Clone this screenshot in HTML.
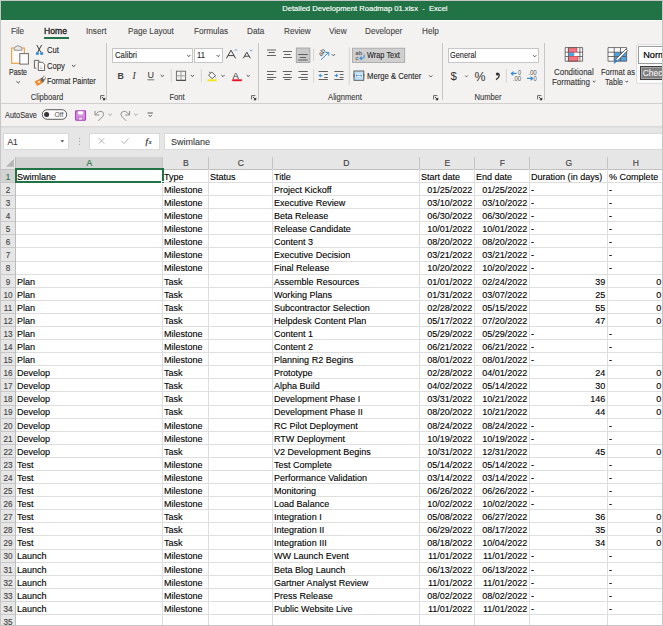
<!DOCTYPE html><html><head><meta charset="utf-8"><style>
*{margin:0;padding:0;box-sizing:border-box}
html,body{width:663px;height:626px;overflow:hidden;background:#fff}
body{position:relative;font-family:"Liberation Sans",sans-serif;color:#262626}
.a{position:absolute}
.t{position:absolute;white-space:nowrap;line-height:1;-webkit-text-stroke-width:0.1px}
.rb{font-size:7.7px;color:#262626}
.tab{font-size:8.3px;color:#3b3b3b}
.cell{font-size:9.5px;color:#000;-webkit-text-stroke:0.12px #000;transform:scaleX(0.95);transform-origin:0 0}
.cr{transform-origin:100% 0}
.hd{font-size:8.6px;color:#333;-webkit-text-stroke-width:0.15px}
svg{position:absolute;overflow:visible}
</style></head><body>
<div class="a" style="left:0;top:0;width:663px;height:103px;background:#f3f2f1"></div>
<div class="a" style="left:0;top:103px;width:663px;height:23.5px;background:#f3f2f1"></div>
<div class="a" style="left:0;top:126.5px;width:663px;height:30px;background:#e6e6e6"></div>
<div class="a" style="left:0;top:0;width:663px;height:20px;background:#217346;border-top:1px solid #1a5c38"></div>
<div class="t" style="left:282.2px;top:5.2px;font-size:7.62px;color:#fff;-webkit-text-stroke:0.15px #fff">Detailed Development Roadmap 01.xlsx&nbsp; -&nbsp; Excel</div>
<div class="a" style="left:0;top:20px;width:663px;height:1px;background:#fbfbfb"></div>
<div class="t" style="left:10.6px;top:27.00px;font-size:8.9px;color:#444;transform-origin:0 0;transform:scaleX(0.92);">File</div>
<div class="t" style="left:43.7px;top:27.00px;font-size:8.9px;color:#262626;transform-origin:0 0;transform:scaleX(0.97);-webkit-text-stroke:0.35px #262626">Home</div>
<div class="t" style="left:86.3px;top:27.00px;font-size:8.9px;color:#444;transform-origin:0 0;transform:scaleX(0.92);">Insert</div>
<div class="t" style="left:127.8px;top:27.00px;font-size:8.9px;color:#444;transform-origin:0 0;transform:scaleX(0.92);">Page Layout</div>
<div class="t" style="left:193.5px;top:27.00px;font-size:8.9px;color:#444;transform-origin:0 0;transform:scaleX(0.92);">Formulas</div>
<div class="t" style="left:247px;top:27.00px;font-size:8.9px;color:#444;transform-origin:0 0;transform:scaleX(0.92);">Data</div>
<div class="t" style="left:284px;top:27.00px;font-size:8.9px;color:#444;transform-origin:0 0;transform:scaleX(0.92);">Review</div>
<div class="t" style="left:328.5px;top:27.00px;font-size:8.9px;color:#444;transform-origin:0 0;transform:scaleX(0.92);">View</div>
<div class="t" style="left:364.7px;top:27.00px;font-size:8.9px;color:#444;transform-origin:0 0;transform:scaleX(0.92);">Developer</div>
<div class="t" style="left:421.5px;top:27.00px;font-size:8.9px;color:#444;transform-origin:0 0;transform:scaleX(0.92);">Help</div>
<div class="a" style="left:44px;top:37px;width:25px;height:2px;background:#217346"></div>
<div class="a" style="left:0;top:102.8px;width:663px;height:1px;background:#d2d0ce"></div>
<div class="a" style="left:0;top:126px;width:663px;height:2.4px;background:linear-gradient(#d6d6d6,#e2e2e2)"></div>
<div class="a" style="left:105.6px;top:43px;width:1px;height:57px;background:#c8c6c4"></div>
<div class="a" style="left:258.4px;top:43px;width:1px;height:57px;background:#c8c6c4"></div>
<div class="a" style="left:442px;top:43px;width:1px;height:57px;background:#c8c6c4"></div>
<div class="a" style="left:543.8px;top:43px;width:1px;height:57px;background:#c8c6c4"></div>
<div class="t" style="left:47.3px;top:94.00px;font-size:8.2px;color:#3a3a3a;transform-origin:0 0;transform:scaleX(0.93) translateX(-50%);">Clipboard</div>
<div class="t" style="left:177px;top:94.00px;font-size:8.2px;color:#3a3a3a;transform-origin:0 0;transform:scaleX(0.93) translateX(-50%);">Font</div>
<div class="t" style="left:345px;top:94.00px;font-size:8.2px;color:#3a3a3a;transform-origin:0 0;transform:scaleX(0.93) translateX(-50%);">Alignment</div>
<div class="t" style="left:488px;top:94.00px;font-size:8.2px;color:#3a3a3a;transform-origin:0 0;transform:scaleX(0.93) translateX(-50%);">Number</div>
<svg style="left:99.6px;top:95px" width="6" height="6" viewBox="0 0 6 6"><path d="M0.6 4.4 V0.6 H4.4" fill="none" stroke="#555" stroke-width="0.9"/><path d="M2 2 L4.6 4.6" stroke="#333" stroke-width="0.9"/><path d="M5 2.8 V5 H2.8 Z" fill="#333" stroke="#333" stroke-width="0.5"/></svg>
<svg style="left:251px;top:95px" width="6" height="6" viewBox="0 0 6 6"><path d="M0.6 4.4 V0.6 H4.4" fill="none" stroke="#555" stroke-width="0.9"/><path d="M2 2 L4.6 4.6" stroke="#333" stroke-width="0.9"/><path d="M5 2.8 V5 H2.8 Z" fill="#333" stroke="#333" stroke-width="0.5"/></svg>
<svg style="left:433px;top:95px" width="6" height="6" viewBox="0 0 6 6"><path d="M0.6 4.4 V0.6 H4.4" fill="none" stroke="#555" stroke-width="0.9"/><path d="M2 2 L4.6 4.6" stroke="#333" stroke-width="0.9"/><path d="M5 2.8 V5 H2.8 Z" fill="#333" stroke="#333" stroke-width="0.5"/></svg>
<svg style="left:537px;top:95px" width="6" height="6" viewBox="0 0 6 6"><path d="M0.6 4.4 V0.6 H4.4" fill="none" stroke="#555" stroke-width="0.9"/><path d="M2 2 L4.6 4.6" stroke="#333" stroke-width="0.9"/><path d="M5 2.8 V5 H2.8 Z" fill="#333" stroke="#333" stroke-width="0.5"/></svg>
<svg style="left:0;top:0" width="663" height="110">
<rect x="11.7" y="48" width="12.6" height="15.3" fill="#fbfbfb" stroke="#ed9b33" stroke-width="1.1"/>
<path d="M14.3 50.3 L14.3 48.3 Q15 46.2 17 46.2 Q18 44.8 19 46.2 Q21.3 46.2 21.9 48.3 L21.9 50.3 Z" fill="#e8e8e8" stroke="#8a8a8a" stroke-width="0.9"/>
<rect x="19.8" y="53.6" width="8.6" height="10.5" fill="#fff" stroke="#6b6b6b" stroke-width="1"/>
<path d="M16.4 81.3 L18.2 83 L20 81.3" fill="none" stroke="#444" stroke-width="0.9"/>
<!-- cut -->
<path d="M36.8 45 L40.6 52 M41.6 45 L37.8 52" stroke="#3a3a3a" stroke-width="1" fill="none"/>
<circle cx="37.4" cy="53.4" r="1.6" fill="#3b8ed6"/>
<circle cx="41.6" cy="53.4" r="1.6" fill="#3b8ed6"/>
<!-- copy -->
<path d="M36.2 68.2 L34.4 68.2 L34.4 60.4 L38.8 60.4 L38.8 62" fill="none" stroke="#555" stroke-width="0.9"/>
<path d="M38.3 62.3 L42.5 62.3 L44.6 64.4 L44.6 70.5 L38.3 70.5 Z" fill="#fff" stroke="#555" stroke-width="0.9"/>
<path d="M39.9 67 h2.6 M39.9 68.6 h2.6" stroke="#999" stroke-width="0.6"/>
<path d="M53.5 0" />
<!-- format painter -->
<path d="M34.6 81.6 L40 78.8 L42.4 83 L37.2 85.9 Z" fill="#ed8a25"/>
<path d="M36.7 82.4 L39.5 80.8 L40.4 82.4" fill="#fff"/>
<path d="M40 78.8 L42.6 77.5 L44.5 80.8 L42.4 83 Z" fill="#666"/>
<path d="M42.4 77.8 L44.4 75.8 M44.6 80 L45.5 77.5" stroke="#555" stroke-width="0.9"/>
<!-- copy chevron -->
<path d="M72 65 L73.7 66.6 L75.4 65" fill="none" stroke="#444" stroke-width="1"/>
</svg>
<div class="t" style="left:9.4px;top:69.00px;font-size:8.2px;color:#262626;transform-origin:0 0;transform:scaleX(0.86);">Paste</div>
<div class="t" style="left:46.6px;top:47.00px;font-size:8.2px;color:#262626;transform-origin:0 0;transform:scaleX(0.93);">Cut</div>
<div class="t" style="left:46.6px;top:63.00px;font-size:8.2px;color:#262626;transform-origin:0 0;transform:scaleX(0.93);">Copy</div>
<div class="t" style="left:46.6px;top:78.00px;font-size:8.2px;color:#262626;transform-origin:0 0;transform:scaleX(0.9);">Format Painter</div>
<div class="a" style="left:112px;top:48px;width:81px;height:15px;background:#fff;border:1px solid #c6c6c6"></div>
<div class="a" style="left:194px;top:48px;width:28.5px;height:15px;background:#fff;border:1px solid #c6c6c6"></div>
<div class="t" style="left:114.8px;top:52.00px;font-size:8.2px;color:#262626;transform-origin:0 0;transform:scaleX(0.95);">Calibri</div>
<div class="t" style="left:196.7px;top:52.00px;font-size:8.2px;color:#262626;transform-origin:0 0;transform:scaleX(0.93);">11</div>
<svg style="left:0;top:0" width="663" height="110"><path d="M187.20000000000002 55.0 L188.8 56.599999999999994 L190.4 55.0" fill="none" stroke="#444" stroke-width="0.95"/><path d="M216.6 55.0 L218.2 56.599999999999994 L219.79999999999998 55.0" fill="none" stroke="#444" stroke-width="0.95"/><path d="M226.4 58.4 L231 50.2 L235.6 58.4 M228 55.6 H234" fill="none" stroke="#444" stroke-width="1"/><path d="M234.6 50.8 L235.9 49.4 L237.2 50.8" fill="none" stroke="#3b8ed6" stroke-width="0.8"/><path d="M243.2 58.4 L246.8 52.2 L250.4 58.4 M244.4 56.2 H249.2" fill="none" stroke="#444" stroke-width="1"/><path d="M249.8 49.8 L251.1 51.1 L252.4 49.8" fill="none" stroke="#3b8ed6" stroke-width="0.8"/><text x="117.4" y="78.6" font-family="Liberation Sans" font-weight="bold" font-size="8.8px" fill="#444">B</text><text x="132.4" y="78.8" font-family="Liberation Serif" font-style="italic" font-size="9.6px" fill="#333">I</text><text x="147.4" y="78.2" font-family="Liberation Sans" font-size="9px" fill="#333">U</text><path d="M147.4 79.8 h6.8" stroke="#555" stroke-width="0.8"/><path d="M160.70000000000002 75.0 L162.3 76.6 L163.9 75.0" fill="none" stroke="#444" stroke-width="0.95"/><path d="M171.3 69 v13.3 M201.4 69 v13.3" stroke="#d0d0d0" stroke-width="0.9"/><rect x="176.4" y="71.2" width="9.2" height="9.2" fill="none" stroke="#666" stroke-width="0.9"/><path d="M181 71.2 v9.2 M176.4 75.8 h9.2" stroke="#999" stroke-width="0.9"/><path d="M176.4 80.3 h9.2" stroke="#444" stroke-width="1"/><path d="M190.8 75.0 L192.4 76.6 L194.0 75.0" fill="none" stroke="#444" stroke-width="0.95"/><path d="M208.6 75.2 L211.8 72 L215.4 75.6 L212.2 78.6 Z" fill="#fff" stroke="#444" stroke-width="0.9"/><path d="M210.5 73.2 L209.2 71.8" stroke="#444" stroke-width="0.9"/><path d="M215.8 76 q0.9 1.3 0 2 q-0.9 -0.7 0 -2z" fill="#3b8ed6"/><rect x="207.4" y="79.3" width="9.2" height="1.9" fill="#f5e51b"/><path d="M221.4 75.0 L223 76.6 L224.6 75.0" fill="none" stroke="#444" stroke-width="0.95"/><text x="232.4" y="78.6" font-family="Liberation Sans" font-size="9.6px" fill="#333">A</text><rect x="232.2" y="79.3" width="9.6" height="1.9" fill="#e81123"/><path d="M246.70000000000002 75.0 L248.3 76.6 L249.9 75.0" fill="none" stroke="#444" stroke-width="0.95"/></svg>
<svg style="left:0;top:0" width="663" height="110"><path d="M267 50 H276" stroke="#5a5a5a" stroke-width="0.95"/><path d="M268.5 52.5 H274.8" stroke="#5a5a5a" stroke-width="0.95"/><path d="M267 55.5 H276" stroke="#5a5a5a" stroke-width="0.95"/><path d="M283 51.5 H292" stroke="#5a5a5a" stroke-width="0.95"/><path d="M284.2 54.5 H290.6" stroke="#5a5a5a" stroke-width="0.95"/><path d="M283 57.5 H292" stroke="#5a5a5a" stroke-width="0.95"/><rect x="296.3" y="48" width="13.6" height="14.4" fill="#c9c9c9" stroke="#9e9e9e" stroke-width="0.8"/><path d="M298.2 54.5 H307.8" stroke="#5a5a5a" stroke-width="0.95"/><path d="M299.9 57.5 H306.1" stroke="#5a5a5a" stroke-width="0.95"/><path d="M298.2 60 H307.8" stroke="#5a5a5a" stroke-width="0.95"/><path d="M313.6 48.8 v12.2 M313.6 69 v13.5 M349.3 47.5 v38" stroke="#d0d0d0" stroke-width="0.9"/><text x="322" y="54.6" text-anchor="middle" font-family="Liberation Sans" font-size="6.8px" fill="#3a3a3a" transform="rotate(-52 322 52.6)">ab</text><path d="M321 59.8 L328.4 52.6 M325.4 52.4 H328.8 V55.8" fill="none" stroke="#3b8ed6" stroke-width="1"/><path d="M331.79999999999995 54.2 L333.4 55.8 L335.0 54.2" fill="none" stroke="#444" stroke-width="0.95"/><path d="M267 71.5 H276.2" stroke="#5a5a5a" stroke-width="0.95"/><path d="M267 74.5 H273.5" stroke="#5a5a5a" stroke-width="0.95"/><path d="M267 77.5 H276.2" stroke="#5a5a5a" stroke-width="0.95"/><path d="M267 79.5 H273.5" stroke="#5a5a5a" stroke-width="0.95"/><path d="M282.8 71.5 H292" stroke="#5a5a5a" stroke-width="0.95"/><path d="M284.3 74.5 H290.5" stroke="#5a5a5a" stroke-width="0.95"/><path d="M282.8 77.5 H292" stroke="#5a5a5a" stroke-width="0.95"/><path d="M284.3 79.5 H290.5" stroke="#5a5a5a" stroke-width="0.95"/><path d="M298.4 71.5 H307.8" stroke="#5a5a5a" stroke-width="0.95"/><path d="M301.1 74.5 H307.8" stroke="#5a5a5a" stroke-width="0.95"/><path d="M298.4 77.5 H307.8" stroke="#5a5a5a" stroke-width="0.95"/><path d="M301.1 79.5 H307.8" stroke="#5a5a5a" stroke-width="0.95"/><path d="M318.6 71.5 H327.9" stroke="#5a5a5a" stroke-width="0.95"/><path d="M324.2 74.5 H327.9" stroke="#5a5a5a" stroke-width="0.95"/><path d="M324.2 77.5 H327.9" stroke="#5a5a5a" stroke-width="0.95"/><path d="M318.6 79.5 H327.9" stroke="#5a5a5a" stroke-width="0.95"/><path d="M322.4 75.6 H320" stroke="#3b8ed6" stroke-width="1.1"/><path d="M318.4 75.6 L320.8 73.6 V77.6 Z" fill="#3b8ed6"/><path d="M334.4 71.5 H343.5" stroke="#5a5a5a" stroke-width="0.95"/><path d="M339.8 74.5 H343.5" stroke="#5a5a5a" stroke-width="0.95"/><path d="M339.8 77.5 H343.5" stroke="#5a5a5a" stroke-width="0.95"/><path d="M334.4 79.5 H343.5" stroke="#5a5a5a" stroke-width="0.95"/><path d="M334.4 75.6 H336.8" stroke="#3b8ed6" stroke-width="1.1"/><path d="M338.4 75.6 L336 73.6 V77.6 Z" fill="#3b8ed6"/><rect x="352.4" y="48.2" width="52.3" height="14.2" fill="#cfcfcf" stroke="#a3a3a3" stroke-width="0.8"/><text x="355.3" y="54.9" font-family="Liberation Sans" font-size="6.2px" fill="#3a3a3a">ab</text><text x="355.5" y="59.6" font-family="Liberation Sans" font-size="6.2px" fill="#3a3a3a">c</text><path d="M364.2 54.8 v1.6 q0 1.8 -1.8 1.8 h-2.2 M361.6 56.6 L359.9 58.2 L361.6 59.8" fill="none" stroke="#3b8ed6" stroke-width="1.05"/><rect x="354" y="71" width="9.8" height="9.3" fill="#bfe0f7" stroke="#555" stroke-width="0.9"/><rect x="355.2" y="74.4" width="7.4" height="2.5" fill="#fff"/><path d="M354 73.8 v3.6 M363.8 73.8 v3.6" stroke="#555" stroke-width="0.9"/><path d="M355.8 75.65 h6.2 M357 74.7 L355.9 75.65 L357 76.6 M360.8 74.7 L361.9 75.65 L360.8 76.6" fill="none" stroke="#2a7ac2" stroke-width="0.7"/><path d="M429.09999999999997 75.4 L430.7 77.0 L432.3 75.4" fill="none" stroke="#444" stroke-width="0.95"/></svg>
<div class="t" style="left:366.9px;top:52.00px;font-size:8.2px;color:#262626;transform-origin:0 0;transform:scaleX(0.9);">Wrap Text</div>
<div class="t" style="left:366.9px;top:73.00px;font-size:8.2px;color:#262626;transform-origin:0 0;transform:scaleX(0.94);">Merge &amp; Center</div>
<div class="a" style="left:447.5px;top:48px;width:91.8px;height:14.6px;background:#fff;border:1px solid #c6c6c6"></div>
<div class="t" style="left:449.8px;top:52.00px;font-size:8.2px;color:#262626;transform-origin:0 0;transform:scaleX(0.9);">General</div>
<svg style="left:0;top:0" width="663" height="110"><path d="M533.1 55.2 L534.7 56.8 L536.3000000000001 55.2" fill="none" stroke="#444" stroke-width="0.95"/><text x="450.6" y="79.9" font-family="Liberation Sans" font-size="11.4px" fill="#333">$</text><path d="M465.2 75.60000000000001 L466.4 76.8 L467.59999999999997 75.60000000000001" fill="none" stroke="#444" stroke-width="0.95"/><text x="474.4" y="80.5" font-family="Liberation Sans" font-size="12.4px" fill="#333">%</text><path d="M497.6 73.4 q1.8 0.2 1.6 2.2 q-0.3 2.6 -3.2 4" fill="none" stroke="#333" stroke-width="1.3"/><circle cx="497.3" cy="73.9" r="1.5" fill="#333"/><path d="M506.3 69 v13.7" stroke="#d0d0d0" stroke-width="0.9"/><path d="M516.6 73.4 H511.6 M513.4 71.6 L511.3 73.4 L513.4 75.2" fill="none" stroke="#3b8ed6" stroke-width="1.2"/><text x="518" y="75.3" font-family="Liberation Sans" font-size="6.4px" fill="#555" textLength="3.2" lengthAdjust="spacingAndGlyphs">0</text><text x="512.8" y="81" font-family="Liberation Sans" font-size="6.4px" fill="#555" textLength="8.4" lengthAdjust="spacingAndGlyphs">.00</text><text x="528.2" y="75.3" font-family="Liberation Sans" font-size="6.4px" fill="#555" textLength="8.6" lengthAdjust="spacingAndGlyphs">.00</text><path d="M527 78.4 H532.4 M530.6 76.6 L532.7 78.4 L530.6 80.2" fill="none" stroke="#3b8ed6" stroke-width="1.2"/><text x="533.6" y="81" font-family="Liberation Sans" font-size="6.4px" fill="#555" textLength="3.2" lengthAdjust="spacingAndGlyphs">0</text></svg>
<svg style="left:0;top:0" width="663" height="110"><rect x="565.2" y="47.6" width="17.4" height="13.6" fill="#fff"/><rect x="568.4" y="47.6" width="8.4" height="4.6" fill="#f1747e"/><rect x="568.4" y="52.2" width="5.8" height="4.3" fill="#4fa3e0"/><rect x="568.4" y="56.5" width="9.6" height="4.7" fill="#f1747e"/><path d="M568.4 47.6 h8.4 v4.6 h-8.4z M568.4 56.5 h9.6 v4.7 h-9.6z" fill="none" stroke="#c8303c" stroke-width="0.7"/><path d="M565.2 47.6 H582.6 V61.2 H565.2 Z M568.4 47.6 V61.2 M579.9 47.6 V61.2 M565.2 52.2 H568.4 M576.8 52.2 H582.6 M565.2 56.5 H568.4 M578 56.5 H582.6" fill="none" stroke="#5a5a5a" stroke-width="0.85"/><rect x="608" y="47.6" width="18.6" height="13.6" fill="#fff"/><rect x="614.2" y="52.2" width="12.4" height="9" fill="#4fa3e0"/><path d="M608 47.6 H626.6 V61.2 H608 Z M614.2 47.6 V61.2 M620.5 47.6 V61.2 M608 52.2 H626.6 M608 56.5 H626.6" fill="none" stroke="#5a5a5a" stroke-width="0.85"/><path d="M627.6 50.6 L617.4 61 L615.6 59.4 L626 49 Z" fill="#fff" stroke="#4a4a4a" stroke-width="0.8"/><path d="M617.2 60.8 q-1.6 2 -3.2 2.6 q0.4 -2 1.6 -4.2 z" fill="#2b7fd0" stroke="#2b7fd0" stroke-width="0.5"/><path d="M592.9000000000001 80.85 L594.2 82.15 L595.5 80.85" fill="none" stroke="#444" stroke-width="0.95"/><path d="M625.4000000000001 80.85 L626.7 82.15 L628.0 80.85" fill="none" stroke="#444" stroke-width="0.95"/></svg>
<div class="t" style="left:553.9px;top:69.00px;font-size:8.2px;color:#333;transform-origin:0 0;transform:scaleX(0.97);">Conditional</div>
<div class="t" style="left:551.6px;top:79.00px;font-size:8.2px;color:#333;transform-origin:0 0;transform:scaleX(0.97);">Formatting</div>
<div class="t" style="left:600.6px;top:69.00px;font-size:8.2px;color:#333;transform-origin:0 0;transform:scaleX(0.92);">Format as</div>
<div class="t" style="left:605.3px;top:79.00px;font-size:8.2px;color:#333;transform-origin:0 0;transform:scaleX(0.92);">Table</div>
<div class="a" style="left:636.4px;top:43.6px;width:30px;height:40.8px;background:#fafafa;border:1px solid #dedede;border-radius:2px"></div>
<div class="a" style="left:638px;top:46px;width:30px;height:17.6px;background:#fff;border:1px solid #9c9c9c"></div>
<div class="t" style="left:643.2px;top:51.00px;font-size:9.2px;color:#000;transform-origin:0 0;transform:scaleX(1);-webkit-text-stroke:0.2px #000">Normal</div>
<div class="a" style="left:640px;top:66px;width:30px;height:14.4px;background:#7f7f7f;border:1px solid #3f3f3f;box-shadow:inset 0 0 0 1px #a5a5a5"></div>
<div class="t" style="left:642.8px;top:69.00px;font-size:8.4px;color:#f2f2f2;transform-origin:0 0;transform:scaleX(1);">Check Cell</div>
<div class="t" style="left:4.6px;top:112.00px;font-size:8.2px;color:#333;transform-origin:0 0;transform:scaleX(0.9);">AutoSave</div>
<svg style="left:0;top:0" width="663" height="160"><rect x="42.3" y="109.7" width="24.4" height="9.6" rx="4.8" fill="#fafafa" stroke="#4a4a4a" stroke-width="0.9"/><circle cx="46.6" cy="114.6" r="2.5" fill="#333"/><text x="54.4" y="117.4" font-family="Liberation Sans" font-size="7px" fill="#555" textLength="9" lengthAdjust="spacingAndGlyphs">Off</text><rect x="75.6" y="110.7" width="9.9" height="9.6" rx="0.6" fill="#d68ee0" stroke="#ad3fc0" stroke-width="1.1"/><path d="M78 111.2 V113.2 Q78 114.4 79.2 114.4 H81.9 Q83.1 114.4 83.1 113.2 V111.2 Z" fill="#fff"/><rect x="78.6" y="117.3" width="3.8" height="2.6" fill="#fff" stroke="#b455c4" stroke-width="0.6"/><path d="M95 110.9 V115 H99.4" fill="none" stroke="#8f8f8f" stroke-width="1"/><path d="M95.4 114.6 Q99.2 109.6 102.9 112.2 Q104.6 114.2 102.6 116.6 L98.4 120.8" fill="none" stroke="#8f8f8f" stroke-width="1"/><path d="M108.39999999999999 113.75 L110.1 115.44999999999999 L111.8 113.75" fill="none" stroke="#9a9a9a" stroke-width="0.95"/><path d="M129.6 110.9 V115 H125.2" fill="none" stroke="#8f8f8f" stroke-width="1"/><path d="M129.2 114.6 Q125.4 109.6 121.7 112.2 Q120 114.2 122 116.6 L126.2 120.8" fill="none" stroke="#8f8f8f" stroke-width="1"/><path d="M134.3 113.75 L136 115.44999999999999 L137.7 113.75" fill="none" stroke="#9a9a9a" stroke-width="0.95"/><path d="M147.6 113 H152.8" stroke="#444" stroke-width="0.9"/><path d="M148.7 115.05 L150.2 116.55 L151.7 115.05" fill="none" stroke="#444" stroke-width="0.95"/></svg>
<div class="a" style="left:2.6px;top:133.2px;width:66.6px;height:16.4px;background:#fff;border:1px solid #d9d9d9"></div>
<div class="t" style="left:7.4px;top:137.6px;font-size:8.4px;color:#333">A1</div>
<div class="a" style="left:89px;top:133.2px;width:71.2px;height:16.4px;background:#fff;border:1px solid #d9d9d9"></div>
<div class="a" style="left:164px;top:133.2px;width:500px;height:16.4px;background:#fff;border:1px solid #d9d9d9"></div>
<div class="t cell" style="left:170.7px;top:137px;color:#3a3a3a;-webkit-text-stroke:0.1px #3a3a3a">Swimlane</div>
<svg style="left:0;top:0" width="663" height="160"><path d="M60.4 140.3 H64.2 L62.3 142.4 Z" fill="#555"/><circle cx="79.6" cy="138.2" r="0.55" fill="#888"/><circle cx="79.6" cy="141.2" r="0.55" fill="#888"/><circle cx="79.6" cy="144.2" r="0.55" fill="#888"/><path d="M98.8 138.2 L104.2 143.6 M104.2 138.2 L98.8 143.6" stroke="#aaa" stroke-width="0.9"/><path d="M121.6 141 L124 143.6 L128.6 138.4" fill="none" stroke="#aaa" stroke-width="0.9"/><text x="145.4" y="144" font-family="Liberation Serif" font-style="italic" font-size="9px" fill="#333" stroke="#333" stroke-width="0.25">f</text><text x="148.8" y="144.4" font-family="Liberation Serif" font-style="italic" font-size="6.2px" fill="#333" stroke="#333" stroke-width="0.2">x</text></svg>
<div class="a" style="left:0;top:156.5px;width:663px;height:12.5px;background:#e6e6e6"></div>
<div class="a" style="left:0;top:169px;width:15px;height:460px;background:#e6e6e6"></div>
<div class="a" style="left:15px;top:156.5px;width:147px;height:12.5px;background:#d2d2d2"></div>
<div class="a" style="left:0;top:169px;width:15px;height:13px;background:#d2d2d2"></div>
<svg style="left:0;top:0" width="20" height="170"><path d="M6 166.7 L13.8 166.7 L13.8 159 Z" fill="#b4b4b4"/></svg>
<div class="a" style="left:0;top:168.6px;width:663px;height:1px;background:#c0c0c0"></div>
<div class="a" style="left:162px;top:157px;width:1px;height:12px;background:#c4c4c4"></div>
<div class="a" style="left:208px;top:157px;width:1px;height:12px;background:#c4c4c4"></div>
<div class="a" style="left:272px;top:157px;width:1px;height:12px;background:#c4c4c4"></div>
<div class="a" style="left:419px;top:157px;width:1px;height:12px;background:#c4c4c4"></div>
<div class="a" style="left:474px;top:157px;width:1px;height:12px;background:#c4c4c4"></div>
<div class="a" style="left:529px;top:157px;width:1px;height:12px;background:#c4c4c4"></div>
<div class="a" style="left:607px;top:157px;width:1px;height:12px;background:#c4c4c4"></div>
<div class="a" style="left:15px;top:157px;width:1px;height:470px;background:#bdbdbd"></div>
<div class="t hd" style="left:89.4px;top:159.4px;transform:translateX(-50%);color:#217346">A</div>
<div class="t hd" style="left:185.9px;top:159.4px;transform:translateX(-50%);color:#444">B</div>
<div class="t hd" style="left:240.9px;top:159.4px;transform:translateX(-50%);color:#444">C</div>
<div class="t hd" style="left:346.4px;top:159.4px;transform:translateX(-50%);color:#444">D</div>
<div class="t hd" style="left:447.4px;top:159.4px;transform:translateX(-50%);color:#444">E</div>
<div class="t hd" style="left:502.4px;top:159.4px;transform:translateX(-50%);color:#444">F</div>
<div class="t hd" style="left:568.9px;top:159.4px;transform:translateX(-50%);color:#444">G</div>
<div class="t hd" style="left:635.9px;top:159.4px;transform:translateX(-50%);color:#444">H</div>
<div class="a" style="left:16px;top:182px;width:647px;height:1px;background:#dedede"></div>
<div class="a" style="left:0;top:182px;width:15px;height:1px;background:#c8c8c8"></div>
<div class="t hd" style="left:7.8px;top:172.80px;font-size:9.2px;transform:translateX(-50%) scaleX(0.88);color:#217346">1</div>
<div class="a" style="left:16px;top:195px;width:647px;height:1px;background:#dedede"></div>
<div class="a" style="left:0;top:195px;width:15px;height:1px;background:#c8c8c8"></div>
<div class="t hd" style="left:7.8px;top:185.89px;font-size:9.2px;transform:translateX(-50%) scaleX(0.88);color:#444">2</div>
<div class="a" style="left:16px;top:208px;width:647px;height:1px;background:#dedede"></div>
<div class="a" style="left:0;top:208px;width:15px;height:1px;background:#c8c8c8"></div>
<div class="t hd" style="left:7.8px;top:198.98px;font-size:9.2px;transform:translateX(-50%) scaleX(0.88);color:#444">3</div>
<div class="a" style="left:16px;top:221px;width:647px;height:1px;background:#dedede"></div>
<div class="a" style="left:0;top:221px;width:15px;height:1px;background:#c8c8c8"></div>
<div class="t hd" style="left:7.8px;top:212.07px;font-size:9.2px;transform:translateX(-50%) scaleX(0.88);color:#444">4</div>
<div class="a" style="left:16px;top:234px;width:647px;height:1px;background:#dedede"></div>
<div class="a" style="left:0;top:234px;width:15px;height:1px;background:#c8c8c8"></div>
<div class="t hd" style="left:7.8px;top:225.16px;font-size:9.2px;transform:translateX(-50%) scaleX(0.88);color:#444">5</div>
<div class="a" style="left:16px;top:247px;width:647px;height:1px;background:#dedede"></div>
<div class="a" style="left:0;top:247px;width:15px;height:1px;background:#c8c8c8"></div>
<div class="t hd" style="left:7.8px;top:238.25px;font-size:9.2px;transform:translateX(-50%) scaleX(0.88);color:#444">6</div>
<div class="a" style="left:16px;top:261px;width:647px;height:1px;background:#dedede"></div>
<div class="a" style="left:0;top:261px;width:15px;height:1px;background:#c8c8c8"></div>
<div class="t hd" style="left:7.8px;top:251.34px;font-size:9.2px;transform:translateX(-50%) scaleX(0.88);color:#444">7</div>
<div class="a" style="left:16px;top:274px;width:647px;height:1px;background:#dedede"></div>
<div class="a" style="left:0;top:274px;width:15px;height:1px;background:#c8c8c8"></div>
<div class="t hd" style="left:7.8px;top:264.43px;font-size:9.2px;transform:translateX(-50%) scaleX(0.88);color:#444">8</div>
<div class="a" style="left:16px;top:287px;width:647px;height:1px;background:#dedede"></div>
<div class="a" style="left:0;top:287px;width:15px;height:1px;background:#c8c8c8"></div>
<div class="t hd" style="left:7.8px;top:277.52px;font-size:9.2px;transform:translateX(-50%) scaleX(0.88);color:#444">9</div>
<div class="a" style="left:16px;top:300px;width:647px;height:1px;background:#dedede"></div>
<div class="a" style="left:0;top:300px;width:15px;height:1px;background:#c8c8c8"></div>
<div class="t hd" style="left:7.8px;top:290.61px;font-size:9.2px;transform:translateX(-50%) scaleX(0.88);color:#444">10</div>
<div class="a" style="left:16px;top:313px;width:647px;height:1px;background:#dedede"></div>
<div class="a" style="left:0;top:313px;width:15px;height:1px;background:#c8c8c8"></div>
<div class="t hd" style="left:7.8px;top:303.70px;font-size:9.2px;transform:translateX(-50%) scaleX(0.88);color:#444">11</div>
<div class="a" style="left:16px;top:326px;width:647px;height:1px;background:#dedede"></div>
<div class="a" style="left:0;top:326px;width:15px;height:1px;background:#c8c8c8"></div>
<div class="t hd" style="left:7.8px;top:316.79px;font-size:9.2px;transform:translateX(-50%) scaleX(0.88);color:#444">12</div>
<div class="a" style="left:16px;top:339px;width:647px;height:1px;background:#dedede"></div>
<div class="a" style="left:0;top:339px;width:15px;height:1px;background:#c8c8c8"></div>
<div class="t hd" style="left:7.8px;top:329.88px;font-size:9.2px;transform:translateX(-50%) scaleX(0.88);color:#444">13</div>
<div class="a" style="left:16px;top:352px;width:647px;height:1px;background:#dedede"></div>
<div class="a" style="left:0;top:352px;width:15px;height:1px;background:#c8c8c8"></div>
<div class="t hd" style="left:7.8px;top:342.97px;font-size:9.2px;transform:translateX(-50%) scaleX(0.88);color:#444">14</div>
<div class="a" style="left:16px;top:365px;width:647px;height:1px;background:#dedede"></div>
<div class="a" style="left:0;top:365px;width:15px;height:1px;background:#c8c8c8"></div>
<div class="t hd" style="left:7.8px;top:356.06px;font-size:9.2px;transform:translateX(-50%) scaleX(0.88);color:#444">15</div>
<div class="a" style="left:16px;top:378px;width:647px;height:1px;background:#dedede"></div>
<div class="a" style="left:0;top:378px;width:15px;height:1px;background:#c8c8c8"></div>
<div class="t hd" style="left:7.8px;top:369.15px;font-size:9.2px;transform:translateX(-50%) scaleX(0.88);color:#444">16</div>
<div class="a" style="left:16px;top:391px;width:647px;height:1px;background:#dedede"></div>
<div class="a" style="left:0;top:391px;width:15px;height:1px;background:#c8c8c8"></div>
<div class="t hd" style="left:7.8px;top:382.24px;font-size:9.2px;transform:translateX(-50%) scaleX(0.88);color:#444">17</div>
<div class="a" style="left:16px;top:405px;width:647px;height:1px;background:#dedede"></div>
<div class="a" style="left:0;top:405px;width:15px;height:1px;background:#c8c8c8"></div>
<div class="t hd" style="left:7.8px;top:395.33px;font-size:9.2px;transform:translateX(-50%) scaleX(0.88);color:#444">18</div>
<div class="a" style="left:16px;top:418px;width:647px;height:1px;background:#dedede"></div>
<div class="a" style="left:0;top:418px;width:15px;height:1px;background:#c8c8c8"></div>
<div class="t hd" style="left:7.8px;top:408.42px;font-size:9.2px;transform:translateX(-50%) scaleX(0.88);color:#444">19</div>
<div class="a" style="left:16px;top:431px;width:647px;height:1px;background:#dedede"></div>
<div class="a" style="left:0;top:431px;width:15px;height:1px;background:#c8c8c8"></div>
<div class="t hd" style="left:7.8px;top:421.51px;font-size:9.2px;transform:translateX(-50%) scaleX(0.88);color:#444">20</div>
<div class="a" style="left:16px;top:444px;width:647px;height:1px;background:#dedede"></div>
<div class="a" style="left:0;top:444px;width:15px;height:1px;background:#c8c8c8"></div>
<div class="t hd" style="left:7.8px;top:434.60px;font-size:9.2px;transform:translateX(-50%) scaleX(0.88);color:#444">21</div>
<div class="a" style="left:16px;top:457px;width:647px;height:1px;background:#dedede"></div>
<div class="a" style="left:0;top:457px;width:15px;height:1px;background:#c8c8c8"></div>
<div class="t hd" style="left:7.8px;top:447.69px;font-size:9.2px;transform:translateX(-50%) scaleX(0.88);color:#444">22</div>
<div class="a" style="left:16px;top:470px;width:647px;height:1px;background:#dedede"></div>
<div class="a" style="left:0;top:470px;width:15px;height:1px;background:#c8c8c8"></div>
<div class="t hd" style="left:7.8px;top:460.78px;font-size:9.2px;transform:translateX(-50%) scaleX(0.88);color:#444">23</div>
<div class="a" style="left:16px;top:483px;width:647px;height:1px;background:#dedede"></div>
<div class="a" style="left:0;top:483px;width:15px;height:1px;background:#c8c8c8"></div>
<div class="t hd" style="left:7.8px;top:473.87px;font-size:9.2px;transform:translateX(-50%) scaleX(0.88);color:#444">24</div>
<div class="a" style="left:16px;top:496px;width:647px;height:1px;background:#dedede"></div>
<div class="a" style="left:0;top:496px;width:15px;height:1px;background:#c8c8c8"></div>
<div class="t hd" style="left:7.8px;top:486.96px;font-size:9.2px;transform:translateX(-50%) scaleX(0.88);color:#444">25</div>
<div class="a" style="left:16px;top:509px;width:647px;height:1px;background:#dedede"></div>
<div class="a" style="left:0;top:509px;width:15px;height:1px;background:#c8c8c8"></div>
<div class="t hd" style="left:7.8px;top:500.05px;font-size:9.2px;transform:translateX(-50%) scaleX(0.88);color:#444">26</div>
<div class="a" style="left:16px;top:522px;width:647px;height:1px;background:#dedede"></div>
<div class="a" style="left:0;top:522px;width:15px;height:1px;background:#c8c8c8"></div>
<div class="t hd" style="left:7.8px;top:513.14px;font-size:9.2px;transform:translateX(-50%) scaleX(0.88);color:#444">27</div>
<div class="a" style="left:16px;top:535px;width:647px;height:1px;background:#dedede"></div>
<div class="a" style="left:0;top:535px;width:15px;height:1px;background:#c8c8c8"></div>
<div class="t hd" style="left:7.8px;top:526.23px;font-size:9.2px;transform:translateX(-50%) scaleX(0.88);color:#444">28</div>
<div class="a" style="left:16px;top:549px;width:647px;height:1px;background:#dedede"></div>
<div class="a" style="left:0;top:549px;width:15px;height:1px;background:#c8c8c8"></div>
<div class="t hd" style="left:7.8px;top:539.32px;font-size:9.2px;transform:translateX(-50%) scaleX(0.88);color:#444">29</div>
<div class="a" style="left:16px;top:562px;width:647px;height:1px;background:#dedede"></div>
<div class="a" style="left:0;top:562px;width:15px;height:1px;background:#c8c8c8"></div>
<div class="t hd" style="left:7.8px;top:552.41px;font-size:9.2px;transform:translateX(-50%) scaleX(0.88);color:#444">30</div>
<div class="a" style="left:16px;top:575px;width:647px;height:1px;background:#dedede"></div>
<div class="a" style="left:0;top:575px;width:15px;height:1px;background:#c8c8c8"></div>
<div class="t hd" style="left:7.8px;top:565.50px;font-size:9.2px;transform:translateX(-50%) scaleX(0.88);color:#444">31</div>
<div class="a" style="left:16px;top:588px;width:647px;height:1px;background:#dedede"></div>
<div class="a" style="left:0;top:588px;width:15px;height:1px;background:#c8c8c8"></div>
<div class="t hd" style="left:7.8px;top:578.59px;font-size:9.2px;transform:translateX(-50%) scaleX(0.88);color:#444">32</div>
<div class="a" style="left:16px;top:601px;width:647px;height:1px;background:#dedede"></div>
<div class="a" style="left:0;top:601px;width:15px;height:1px;background:#c8c8c8"></div>
<div class="t hd" style="left:7.8px;top:591.68px;font-size:9.2px;transform:translateX(-50%) scaleX(0.88);color:#444">33</div>
<div class="a" style="left:16px;top:614px;width:647px;height:1px;background:#dedede"></div>
<div class="a" style="left:0;top:614px;width:15px;height:1px;background:#c8c8c8"></div>
<div class="t hd" style="left:7.8px;top:604.77px;font-size:9.2px;transform:translateX(-50%) scaleX(0.88);color:#444">34</div>
<div class="a" style="left:16px;top:627px;width:647px;height:1px;background:#dedede"></div>
<div class="a" style="left:0;top:627px;width:15px;height:1px;background:#c8c8c8"></div>
<div class="t hd" style="left:7.8px;top:617.86px;font-size:9.2px;transform:translateX(-50%) scaleX(0.88);color:#444">35</div>
<div class="a" style="left:162px;top:169px;width:1px;height:460px;background:#dedede"></div>
<div class="a" style="left:208px;top:169px;width:1px;height:460px;background:#dedede"></div>
<div class="a" style="left:272px;top:169px;width:1px;height:460px;background:#dedede"></div>
<div class="a" style="left:419px;top:169px;width:1px;height:460px;background:#dedede"></div>
<div class="a" style="left:474px;top:169px;width:1px;height:460px;background:#dedede"></div>
<div class="a" style="left:529px;top:169px;width:1px;height:460px;background:#dedede"></div>
<div class="a" style="left:607px;top:169px;width:1px;height:460px;background:#dedede"></div>
<div class="t cell" style="left:17.2px;top:171.80px">Swimlane</div>
<div class="t cell" style="left:164.2px;top:171.80px">Type</div>
<div class="t cell" style="left:210.2px;top:171.80px">Status</div>
<div class="t cell" style="left:274.2px;top:171.80px">Title</div>
<div class="t cell" style="left:421.2px;top:171.80px">Start date</div>
<div class="t cell" style="left:476.2px;top:171.80px">End date</div>
<div class="t cell" style="left:531.2px;top:171.80px">Duration (in days)</div>
<div class="t cell" style="left:609.2px;top:171.80px">% Complete</div>
<div class="t cell" style="left:164.2px;top:184.89px">Milestone</div>
<div class="t cell" style="left:274.2px;top:184.89px">Project Kickoff</div>
<div class="t cell cr" style="left:419px;width:53.4px;text-align:right;top:184.89px">01/25/2022</div>
<div class="t cell cr" style="left:474px;width:53.4px;text-align:right;top:184.89px">01/25/2022</div>
<div class="t cell" style="left:531.2px;top:184.89px">-</div>
<div class="t cell" style="left:609.2px;top:184.89px">-</div>
<div class="t cell" style="left:164.2px;top:197.98px">Milestone</div>
<div class="t cell" style="left:274.2px;top:197.98px">Executive Review</div>
<div class="t cell cr" style="left:419px;width:53.4px;text-align:right;top:197.98px">03/10/2022</div>
<div class="t cell cr" style="left:474px;width:53.4px;text-align:right;top:197.98px">03/10/2022</div>
<div class="t cell" style="left:531.2px;top:197.98px">-</div>
<div class="t cell" style="left:609.2px;top:197.98px">-</div>
<div class="t cell" style="left:164.2px;top:211.07px">Milestone</div>
<div class="t cell" style="left:274.2px;top:211.07px">Beta Release</div>
<div class="t cell cr" style="left:419px;width:53.4px;text-align:right;top:211.07px">06/30/2022</div>
<div class="t cell cr" style="left:474px;width:53.4px;text-align:right;top:211.07px">06/30/2022</div>
<div class="t cell" style="left:531.2px;top:211.07px">-</div>
<div class="t cell" style="left:609.2px;top:211.07px">-</div>
<div class="t cell" style="left:164.2px;top:224.16px">Milestone</div>
<div class="t cell" style="left:274.2px;top:224.16px">Release Candidate</div>
<div class="t cell cr" style="left:419px;width:53.4px;text-align:right;top:224.16px">10/01/2022</div>
<div class="t cell cr" style="left:474px;width:53.4px;text-align:right;top:224.16px">10/01/2022</div>
<div class="t cell" style="left:531.2px;top:224.16px">-</div>
<div class="t cell" style="left:609.2px;top:224.16px">-</div>
<div class="t cell" style="left:164.2px;top:237.25px">Milestone</div>
<div class="t cell" style="left:274.2px;top:237.25px">Content 3</div>
<div class="t cell cr" style="left:419px;width:53.4px;text-align:right;top:237.25px">08/20/2022</div>
<div class="t cell cr" style="left:474px;width:53.4px;text-align:right;top:237.25px">08/20/2022</div>
<div class="t cell" style="left:531.2px;top:237.25px">-</div>
<div class="t cell" style="left:609.2px;top:237.25px">-</div>
<div class="t cell" style="left:164.2px;top:250.34px">Milestone</div>
<div class="t cell" style="left:274.2px;top:250.34px">Executive Decision</div>
<div class="t cell cr" style="left:419px;width:53.4px;text-align:right;top:250.34px">03/21/2022</div>
<div class="t cell cr" style="left:474px;width:53.4px;text-align:right;top:250.34px">03/21/2022</div>
<div class="t cell" style="left:531.2px;top:250.34px">-</div>
<div class="t cell" style="left:609.2px;top:250.34px">-</div>
<div class="t cell" style="left:164.2px;top:263.43px">Milestone</div>
<div class="t cell" style="left:274.2px;top:263.43px">Final Release</div>
<div class="t cell cr" style="left:419px;width:53.4px;text-align:right;top:263.43px">10/20/2022</div>
<div class="t cell cr" style="left:474px;width:53.4px;text-align:right;top:263.43px">10/20/2022</div>
<div class="t cell" style="left:531.2px;top:263.43px">-</div>
<div class="t cell" style="left:609.2px;top:263.43px">-</div>
<div class="t cell" style="left:17.2px;top:276.52px">Plan</div>
<div class="t cell" style="left:164.2px;top:276.52px">Task</div>
<div class="t cell" style="left:274.2px;top:276.52px">Assemble Resources</div>
<div class="t cell cr" style="left:419px;width:53.4px;text-align:right;top:276.52px">01/01/2022</div>
<div class="t cell cr" style="left:474px;width:53.4px;text-align:right;top:276.52px">02/24/2022</div>
<div class="t cell cr" style="left:529px;width:76.4px;text-align:right;top:276.52px">39</div>
<div class="t cell cr" style="left:607px;width:54.4px;text-align:right;top:276.52px">0</div>
<div class="t cell" style="left:17.2px;top:289.61px">Plan</div>
<div class="t cell" style="left:164.2px;top:289.61px">Task</div>
<div class="t cell" style="left:274.2px;top:289.61px">Working Plans</div>
<div class="t cell cr" style="left:419px;width:53.4px;text-align:right;top:289.61px">01/31/2022</div>
<div class="t cell cr" style="left:474px;width:53.4px;text-align:right;top:289.61px">03/07/2022</div>
<div class="t cell cr" style="left:529px;width:76.4px;text-align:right;top:289.61px">25</div>
<div class="t cell cr" style="left:607px;width:54.4px;text-align:right;top:289.61px">0</div>
<div class="t cell" style="left:17.2px;top:302.70px">Plan</div>
<div class="t cell" style="left:164.2px;top:302.70px">Task</div>
<div class="t cell" style="left:274.2px;top:302.70px">Subcontractor Selection</div>
<div class="t cell cr" style="left:419px;width:53.4px;text-align:right;top:302.70px">02/28/2022</div>
<div class="t cell cr" style="left:474px;width:53.4px;text-align:right;top:302.70px">05/15/2022</div>
<div class="t cell cr" style="left:529px;width:76.4px;text-align:right;top:302.70px">55</div>
<div class="t cell cr" style="left:607px;width:54.4px;text-align:right;top:302.70px">0</div>
<div class="t cell" style="left:17.2px;top:315.79px">Plan</div>
<div class="t cell" style="left:164.2px;top:315.79px">Task</div>
<div class="t cell" style="left:274.2px;top:315.79px">Helpdesk Content Plan</div>
<div class="t cell cr" style="left:419px;width:53.4px;text-align:right;top:315.79px">05/17/2022</div>
<div class="t cell cr" style="left:474px;width:53.4px;text-align:right;top:315.79px">07/20/2022</div>
<div class="t cell cr" style="left:529px;width:76.4px;text-align:right;top:315.79px">47</div>
<div class="t cell cr" style="left:607px;width:54.4px;text-align:right;top:315.79px">0</div>
<div class="t cell" style="left:17.2px;top:328.88px">Plan</div>
<div class="t cell" style="left:164.2px;top:328.88px">Milestone</div>
<div class="t cell" style="left:274.2px;top:328.88px">Content 1</div>
<div class="t cell cr" style="left:419px;width:53.4px;text-align:right;top:328.88px">05/29/2022</div>
<div class="t cell cr" style="left:474px;width:53.4px;text-align:right;top:328.88px">05/29/2022</div>
<div class="t cell" style="left:531.2px;top:328.88px">-</div>
<div class="t cell" style="left:609.2px;top:328.88px">-</div>
<div class="t cell" style="left:17.2px;top:341.97px">Plan</div>
<div class="t cell" style="left:164.2px;top:341.97px">Milestone</div>
<div class="t cell" style="left:274.2px;top:341.97px">Content 2</div>
<div class="t cell cr" style="left:419px;width:53.4px;text-align:right;top:341.97px">06/21/2022</div>
<div class="t cell cr" style="left:474px;width:53.4px;text-align:right;top:341.97px">06/21/2022</div>
<div class="t cell" style="left:531.2px;top:341.97px">-</div>
<div class="t cell" style="left:609.2px;top:341.97px">-</div>
<div class="t cell" style="left:17.2px;top:355.06px">Plan</div>
<div class="t cell" style="left:164.2px;top:355.06px">Milestone</div>
<div class="t cell" style="left:274.2px;top:355.06px">Planning R2 Begins</div>
<div class="t cell cr" style="left:419px;width:53.4px;text-align:right;top:355.06px">08/01/2022</div>
<div class="t cell cr" style="left:474px;width:53.4px;text-align:right;top:355.06px">08/01/2022</div>
<div class="t cell" style="left:531.2px;top:355.06px">-</div>
<div class="t cell" style="left:609.2px;top:355.06px">-</div>
<div class="t cell" style="left:17.2px;top:368.15px">Develop</div>
<div class="t cell" style="left:164.2px;top:368.15px">Task</div>
<div class="t cell" style="left:274.2px;top:368.15px">Prototype</div>
<div class="t cell cr" style="left:419px;width:53.4px;text-align:right;top:368.15px">02/28/2022</div>
<div class="t cell cr" style="left:474px;width:53.4px;text-align:right;top:368.15px">04/01/2022</div>
<div class="t cell cr" style="left:529px;width:76.4px;text-align:right;top:368.15px">24</div>
<div class="t cell cr" style="left:607px;width:54.4px;text-align:right;top:368.15px">0</div>
<div class="t cell" style="left:17.2px;top:381.24px">Develop</div>
<div class="t cell" style="left:164.2px;top:381.24px">Task</div>
<div class="t cell" style="left:274.2px;top:381.24px">Alpha Build</div>
<div class="t cell cr" style="left:419px;width:53.4px;text-align:right;top:381.24px">04/02/2022</div>
<div class="t cell cr" style="left:474px;width:53.4px;text-align:right;top:381.24px">05/14/2022</div>
<div class="t cell cr" style="left:529px;width:76.4px;text-align:right;top:381.24px">30</div>
<div class="t cell cr" style="left:607px;width:54.4px;text-align:right;top:381.24px">0</div>
<div class="t cell" style="left:17.2px;top:394.33px">Develop</div>
<div class="t cell" style="left:164.2px;top:394.33px">Task</div>
<div class="t cell" style="left:274.2px;top:394.33px">Development Phase I</div>
<div class="t cell cr" style="left:419px;width:53.4px;text-align:right;top:394.33px">03/31/2022</div>
<div class="t cell cr" style="left:474px;width:53.4px;text-align:right;top:394.33px">10/21/2022</div>
<div class="t cell cr" style="left:529px;width:76.4px;text-align:right;top:394.33px">146</div>
<div class="t cell cr" style="left:607px;width:54.4px;text-align:right;top:394.33px">0</div>
<div class="t cell" style="left:17.2px;top:407.42px">Develop</div>
<div class="t cell" style="left:164.2px;top:407.42px">Task</div>
<div class="t cell" style="left:274.2px;top:407.42px">Development Phase II</div>
<div class="t cell cr" style="left:419px;width:53.4px;text-align:right;top:407.42px">08/20/2022</div>
<div class="t cell cr" style="left:474px;width:53.4px;text-align:right;top:407.42px">10/21/2022</div>
<div class="t cell cr" style="left:529px;width:76.4px;text-align:right;top:407.42px">44</div>
<div class="t cell cr" style="left:607px;width:54.4px;text-align:right;top:407.42px">0</div>
<div class="t cell" style="left:17.2px;top:420.51px">Develop</div>
<div class="t cell" style="left:164.2px;top:420.51px">Milestone</div>
<div class="t cell" style="left:274.2px;top:420.51px">RC Pilot Deployment</div>
<div class="t cell cr" style="left:419px;width:53.4px;text-align:right;top:420.51px">08/24/2022</div>
<div class="t cell cr" style="left:474px;width:53.4px;text-align:right;top:420.51px">08/24/2022</div>
<div class="t cell" style="left:531.2px;top:420.51px">-</div>
<div class="t cell" style="left:609.2px;top:420.51px">-</div>
<div class="t cell" style="left:17.2px;top:433.60px">Develop</div>
<div class="t cell" style="left:164.2px;top:433.60px">Milestone</div>
<div class="t cell" style="left:274.2px;top:433.60px">RTW Deployment</div>
<div class="t cell cr" style="left:419px;width:53.4px;text-align:right;top:433.60px">10/19/2022</div>
<div class="t cell cr" style="left:474px;width:53.4px;text-align:right;top:433.60px">10/19/2022</div>
<div class="t cell" style="left:531.2px;top:433.60px">-</div>
<div class="t cell" style="left:609.2px;top:433.60px">-</div>
<div class="t cell" style="left:17.2px;top:446.69px">Develop</div>
<div class="t cell" style="left:164.2px;top:446.69px">Task</div>
<div class="t cell" style="left:274.2px;top:446.69px">V2 Development Begins</div>
<div class="t cell cr" style="left:419px;width:53.4px;text-align:right;top:446.69px">10/31/2022</div>
<div class="t cell cr" style="left:474px;width:53.4px;text-align:right;top:446.69px">12/31/2022</div>
<div class="t cell cr" style="left:529px;width:76.4px;text-align:right;top:446.69px">45</div>
<div class="t cell cr" style="left:607px;width:54.4px;text-align:right;top:446.69px">0</div>
<div class="t cell" style="left:17.2px;top:459.78px">Test</div>
<div class="t cell" style="left:164.2px;top:459.78px">Milestone</div>
<div class="t cell" style="left:274.2px;top:459.78px">Test Complete</div>
<div class="t cell cr" style="left:419px;width:53.4px;text-align:right;top:459.78px">05/14/2022</div>
<div class="t cell cr" style="left:474px;width:53.4px;text-align:right;top:459.78px">05/14/2022</div>
<div class="t cell" style="left:531.2px;top:459.78px">-</div>
<div class="t cell" style="left:609.2px;top:459.78px">-</div>
<div class="t cell" style="left:17.2px;top:472.87px">Test</div>
<div class="t cell" style="left:164.2px;top:472.87px">Milestone</div>
<div class="t cell" style="left:274.2px;top:472.87px">Performance Validation</div>
<div class="t cell cr" style="left:419px;width:53.4px;text-align:right;top:472.87px">03/14/2022</div>
<div class="t cell cr" style="left:474px;width:53.4px;text-align:right;top:472.87px">03/14/2022</div>
<div class="t cell" style="left:531.2px;top:472.87px">-</div>
<div class="t cell" style="left:609.2px;top:472.87px">-</div>
<div class="t cell" style="left:17.2px;top:485.96px">Test</div>
<div class="t cell" style="left:164.2px;top:485.96px">Milestone</div>
<div class="t cell" style="left:274.2px;top:485.96px">Monitoring</div>
<div class="t cell cr" style="left:419px;width:53.4px;text-align:right;top:485.96px">06/26/2022</div>
<div class="t cell cr" style="left:474px;width:53.4px;text-align:right;top:485.96px">06/26/2022</div>
<div class="t cell" style="left:531.2px;top:485.96px">-</div>
<div class="t cell" style="left:609.2px;top:485.96px">-</div>
<div class="t cell" style="left:17.2px;top:499.05px">Test</div>
<div class="t cell" style="left:164.2px;top:499.05px">Milestone</div>
<div class="t cell" style="left:274.2px;top:499.05px">Load Balance</div>
<div class="t cell cr" style="left:419px;width:53.4px;text-align:right;top:499.05px">10/02/2022</div>
<div class="t cell cr" style="left:474px;width:53.4px;text-align:right;top:499.05px">10/02/2022</div>
<div class="t cell" style="left:531.2px;top:499.05px">-</div>
<div class="t cell" style="left:609.2px;top:499.05px">-</div>
<div class="t cell" style="left:17.2px;top:512.14px">Test</div>
<div class="t cell" style="left:164.2px;top:512.14px">Task</div>
<div class="t cell" style="left:274.2px;top:512.14px">Integration I</div>
<div class="t cell cr" style="left:419px;width:53.4px;text-align:right;top:512.14px">05/08/2022</div>
<div class="t cell cr" style="left:474px;width:53.4px;text-align:right;top:512.14px">06/27/2022</div>
<div class="t cell cr" style="left:529px;width:76.4px;text-align:right;top:512.14px">36</div>
<div class="t cell cr" style="left:607px;width:54.4px;text-align:right;top:512.14px">0</div>
<div class="t cell" style="left:17.2px;top:525.23px">Test</div>
<div class="t cell" style="left:164.2px;top:525.23px">Task</div>
<div class="t cell" style="left:274.2px;top:525.23px">Integration II</div>
<div class="t cell cr" style="left:419px;width:53.4px;text-align:right;top:525.23px">06/29/2022</div>
<div class="t cell cr" style="left:474px;width:53.4px;text-align:right;top:525.23px">08/17/2022</div>
<div class="t cell cr" style="left:529px;width:76.4px;text-align:right;top:525.23px">35</div>
<div class="t cell cr" style="left:607px;width:54.4px;text-align:right;top:525.23px">0</div>
<div class="t cell" style="left:17.2px;top:538.32px">Test</div>
<div class="t cell" style="left:164.2px;top:538.32px">Task</div>
<div class="t cell" style="left:274.2px;top:538.32px">Integration III</div>
<div class="t cell cr" style="left:419px;width:53.4px;text-align:right;top:538.32px">08/18/2022</div>
<div class="t cell cr" style="left:474px;width:53.4px;text-align:right;top:538.32px">10/04/2022</div>
<div class="t cell cr" style="left:529px;width:76.4px;text-align:right;top:538.32px">34</div>
<div class="t cell cr" style="left:607px;width:54.4px;text-align:right;top:538.32px">0</div>
<div class="t cell" style="left:17.2px;top:551.41px">Launch</div>
<div class="t cell" style="left:164.2px;top:551.41px">Milestone</div>
<div class="t cell" style="left:274.2px;top:551.41px">WW Launch Event</div>
<div class="t cell cr" style="left:419px;width:53.4px;text-align:right;top:551.41px">11/01/2022</div>
<div class="t cell cr" style="left:474px;width:53.4px;text-align:right;top:551.41px">11/01/2022</div>
<div class="t cell" style="left:531.2px;top:551.41px">-</div>
<div class="t cell" style="left:609.2px;top:551.41px">-</div>
<div class="t cell" style="left:17.2px;top:564.50px">Launch</div>
<div class="t cell" style="left:164.2px;top:564.50px">Milestone</div>
<div class="t cell" style="left:274.2px;top:564.50px">Beta Blog Launch</div>
<div class="t cell cr" style="left:419px;width:53.4px;text-align:right;top:564.50px">06/13/2022</div>
<div class="t cell cr" style="left:474px;width:53.4px;text-align:right;top:564.50px">06/13/2022</div>
<div class="t cell" style="left:531.2px;top:564.50px">-</div>
<div class="t cell" style="left:609.2px;top:564.50px">-</div>
<div class="t cell" style="left:17.2px;top:577.59px">Launch</div>
<div class="t cell" style="left:164.2px;top:577.59px">Milestone</div>
<div class="t cell" style="left:274.2px;top:577.59px">Gartner Analyst Review</div>
<div class="t cell cr" style="left:419px;width:53.4px;text-align:right;top:577.59px">11/01/2022</div>
<div class="t cell cr" style="left:474px;width:53.4px;text-align:right;top:577.59px">11/01/2022</div>
<div class="t cell" style="left:531.2px;top:577.59px">-</div>
<div class="t cell" style="left:609.2px;top:577.59px">-</div>
<div class="t cell" style="left:17.2px;top:590.68px">Launch</div>
<div class="t cell" style="left:164.2px;top:590.68px">Milestone</div>
<div class="t cell" style="left:274.2px;top:590.68px">Press Release</div>
<div class="t cell cr" style="left:419px;width:53.4px;text-align:right;top:590.68px">08/02/2022</div>
<div class="t cell cr" style="left:474px;width:53.4px;text-align:right;top:590.68px">08/02/2022</div>
<div class="t cell" style="left:531.2px;top:590.68px">-</div>
<div class="t cell" style="left:609.2px;top:590.68px">-</div>
<div class="t cell" style="left:17.2px;top:603.77px">Launch</div>
<div class="t cell" style="left:164.2px;top:603.77px">Milestone</div>
<div class="t cell" style="left:274.2px;top:603.77px">Public Website Live</div>
<div class="t cell cr" style="left:419px;width:53.4px;text-align:right;top:603.77px">11/01/2022</div>
<div class="t cell cr" style="left:474px;width:53.4px;text-align:right;top:603.77px">11/01/2022</div>
<div class="t cell" style="left:531.2px;top:603.77px">-</div>
<div class="t cell" style="left:609.2px;top:603.77px">-</div>
<div class="a" style="left:15px;top:168px;width:149px;height:15.2px;border:2px solid #217346"></div>
<div class="a" style="left:161.2px;top:180.6px;width:3.6px;height:3.6px;background:#217346;border:0.6px solid #fff"></div>
<div class="a" style="left:0;top:0;width:663px;height:626px;border:1px solid #c6c6c6"></div>
</body></html>
